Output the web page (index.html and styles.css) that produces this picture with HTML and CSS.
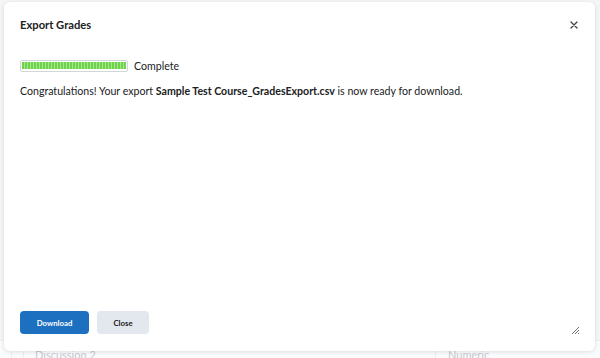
FILE: index.html
```html
<!DOCTYPE html>
<html lang="en">
<head>
    <meta charset="UTF-8">
    <meta name="viewport" content="width=device-width, initial-scale=1.0">
    <title>Export Grades</title>
    <link rel="stylesheet" href="styles.css">
</head>
<body>
    <div class="page">
        <div class="page-row">
            <span class="cell-check"></span>
            <span class="cell-name">Discussion 2</span>
            <span class="cell-type">Numeric</span>
        </div>
    </div>

    <div class="dialog">
        <div class="dialog-header">
            <h1 class="dialog-title">Export Grades</h1>
            <button class="btn-dismiss" aria-label="Close">
                <svg width="8" height="8" viewBox="0 0 8 8">
                    <path d="M1 1L7 7M7 1L1 7" stroke="#3f4244" stroke-width="1.3" stroke-linecap="round"/>
                </svg>
            </button>
        </div>

        <div class="dialog-body">
            <div class="progress">
                <div class="progress-track"><div class="progress-fill"></div></div>
                <span class="progress-label">Complete</span>
            </div>
            <p class="message">Congratulations! Your export <strong>Sample Test Course_GradesExport.csv</strong> is now ready for download.</p>
        </div>

        <div class="dialog-footer">
            <button class="btn btn-primary">Download</button>
            <button class="btn btn-secondary">Close</button>
            <svg class="resize" width="9" height="9" viewBox="0 0 9 9">
                <path d="M1 8L8 1M4 8L8 4M7 8L8 7" stroke="#6e7376" stroke-width="1"/>
            </svg>
        </div>
    </div>
</body>
</html>
```

FILE: styles.css
```css
* {
    margin: 0;
    padding: 0;
    box-sizing: border-box;
}

body {
    font-family: 'Lato', 'Noto Sans', sans-serif;
    background: #f4f5f6;
    width: 600px;
    height: 358px;
    overflow: hidden;
    position: relative;
}

.page {
    height: 358px;
    display: flex;
    flex-direction: column;
    justify-content: flex-end;
}

.page-row {
    height: 18px;
    display: flex;
    align-items: flex-start;
    background: #fafbfc;
    border-top: 1px solid #eceef0;
    color: #c7cacd;
    font-size: 11px;
}

.cell-check {
    width: 13px;
    height: 18px;
    margin-left: 11px;
    border-left: 1px solid #eceef0;
    border-right: 1px solid #eceef0;
}

.cell-name {
    width: 411px;
    padding-left: 11px;
    padding-top: 8px;
    line-height: 12px;
}

.cell-type {
    border-left: 1px solid #eceef0;
    height: 18px;
    padding-left: 12px;
    padding-top: 8px;
    line-height: 12px;
}

.dialog {
    position: absolute;
    top: 2px;
    left: 4px;
    width: 591px;
    height: 349px;
    background: #fff;
    border-radius: 6px;
    box-shadow: 0 1px 4px rgba(0, 0, 0, 0.12);
    display: flex;
    flex-direction: column;
    color: #202122;
}

.dialog-header {
    display: flex;
    align-items: center;
    justify-content: space-between;
    padding: 9px 17px 0 16px;
    height: 36px;
}

.dialog-title {
    font-size: 11.2px;
    font-weight: 700;
    color: #202122;
}

.btn-dismiss {
    border: none;
    background: none;
    width: 8px;
    height: 8px;
    display: flex;
}

.dialog-body {
    flex: 1;
    padding: 22px 16px 0 16px;
}

.progress {
    display: flex;
    align-items: center;
    gap: 6px;
    height: 12px;
}

.progress-track {
    width: 108px;
    height: 12px;
    border: 1px solid #d3d6d9;
    border-radius: 2px;
    padding: 1px;
    background: #fff;
}

.progress-fill {
    height: 7px;
    background: repeating-linear-gradient(90deg, #6fd34a 0, #6fd34a 2px, #a9e893 2px, #a9e893 3px);
}

.progress-label {
    font-size: 10.6px;
    color: #202122;
}

.message {
    margin-top: 12px;
    font-size: 10.6px;
    line-height: 14px;
    color: #202122;
}

.message strong {
    font-weight: 700;
}

.dialog-footer {
    display: flex;
    align-items: center;
    gap: 8px;
    padding: 0 16px 17px 16px;
    position: relative;
}

.btn {
    height: 23px;
    border: none;
    border-radius: 4px;
    font-family: 'Lato', sans-serif;
    font-size: 7.8px;
    font-weight: 700;
    cursor: pointer;
}

.btn-primary {
    width: 69px;
    background: #1d6fbf;
    color: #fff;
}

.btn-secondary {
    width: 52px;
    background: #e3e8ef;
    color: #202122;
}

.resize {
    position: absolute;
    right: 15px;
    bottom: 16px;
}
```
